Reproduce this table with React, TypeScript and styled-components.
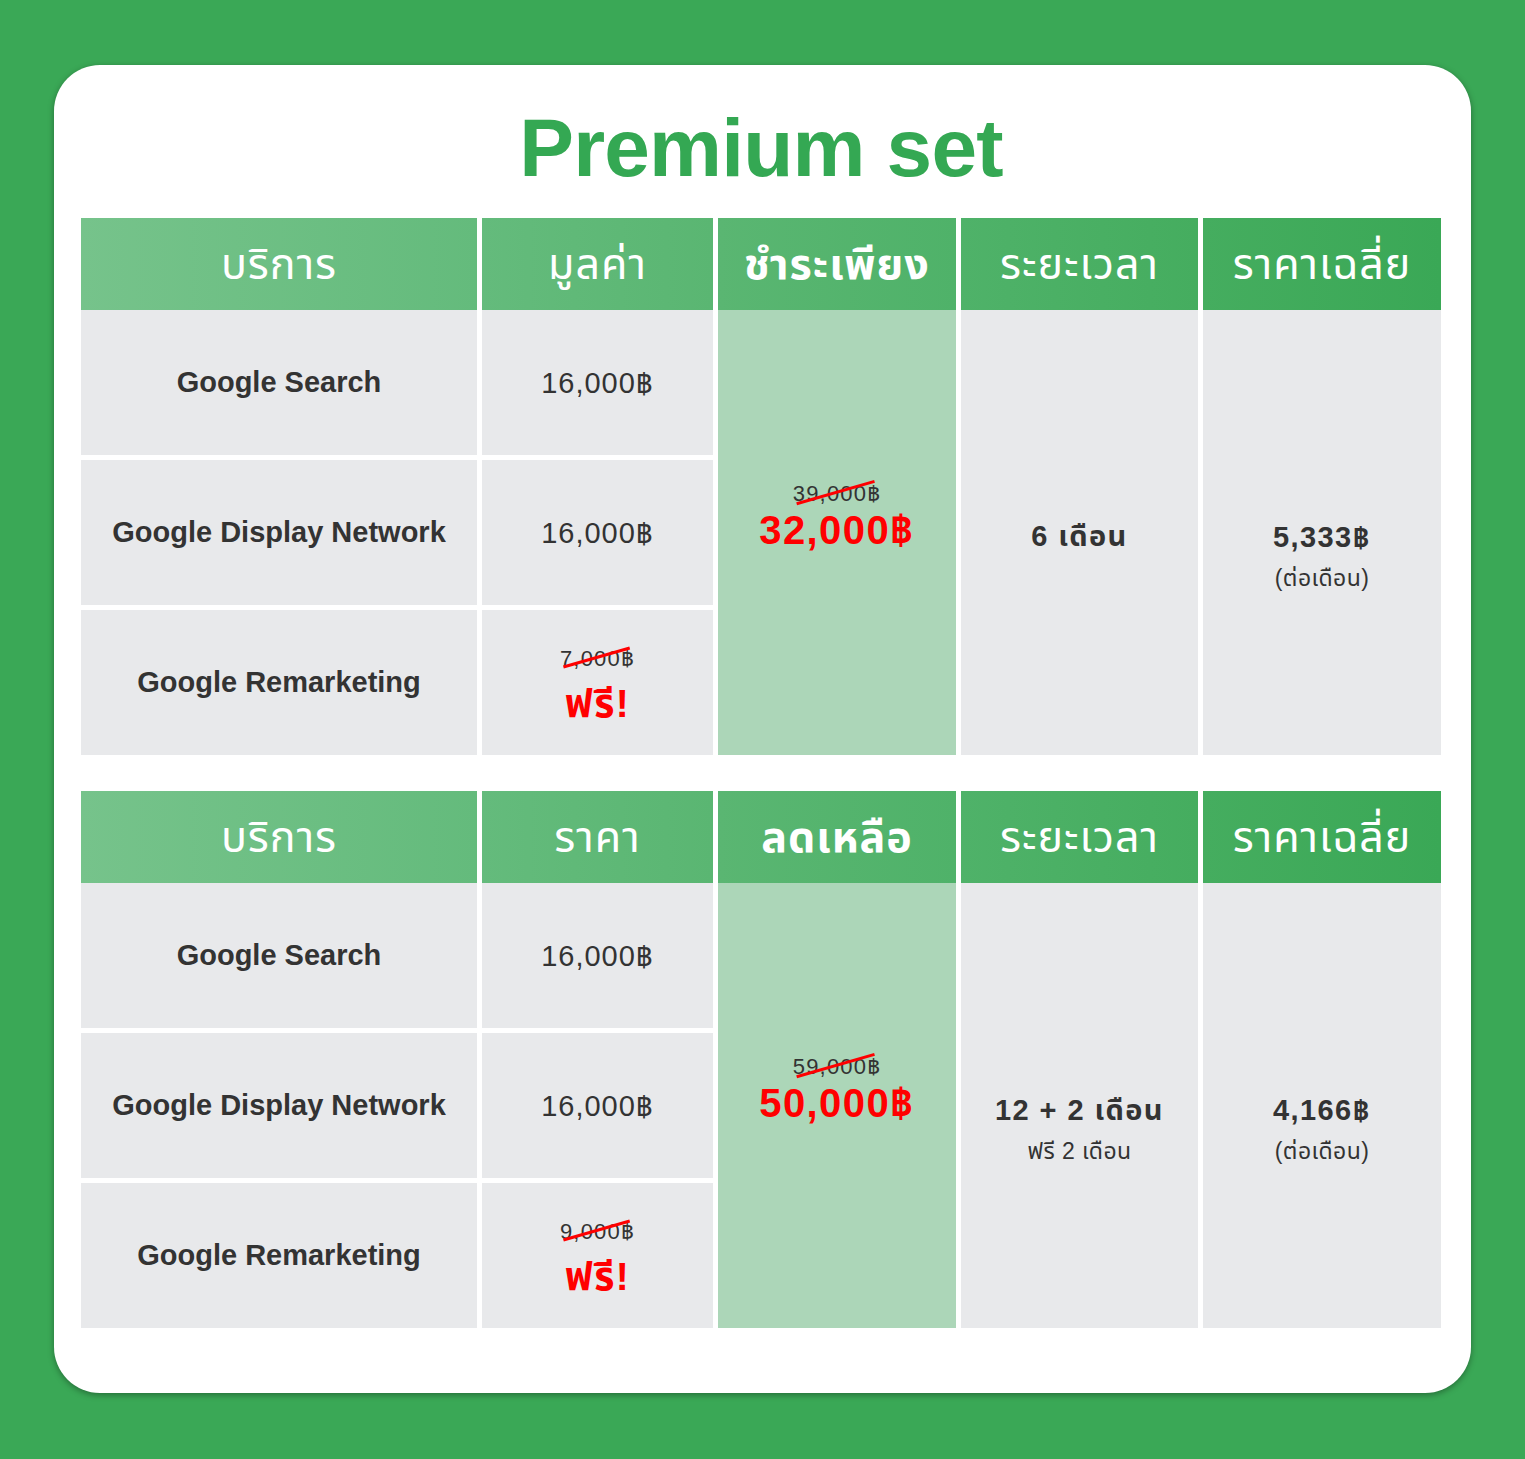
import React from 'react';
import styled, { createGlobalStyle, css } from 'styled-components';

const GlobalStyle = createGlobalStyle`
  body {
    margin: 0;
    background: #3aa856;
    font-family: "Liberation Sans", "Noto Sans Thai", "Noto Sans", sans-serif;
  }
`;

const COLS = '396px 231px 238px 237px 238px';

const Page = styled.div`
  width: 1525px;
  height: 1459px;
  padding: 65px 0 0 54px;
  box-sizing: border-box;
`;

const Card = styled.div`
  width: 1417px;
  height: 1328px;
  box-sizing: border-box;
  background: #ffffff;
  border-radius: 46px;
  box-shadow: 0 2px 6px rgba(0, 0, 0, 0.35);
  padding: 42px 30px 0 27px;
  display: flex;
  flex-direction: column;
`;

const Title = styled.h1`
  margin: 0 0 29px;
  text-align: center;
  font-family: "Liberation Sans", sans-serif;
  font-size: 82px;
  line-height: 82px;
  font-weight: 700;
  letter-spacing: -0.8px;
  color: #34a853;
`;

const Table = styled.div<{ $last?: boolean }>`
  width: 1360px;
  margin-bottom: ${({ $last }) => ($last ? 0 : 36)}px;
`;

const HeaderRow = styled.div`
  display: grid;
  grid-template-columns: ${COLS};
  column-gap: 5px;
  height: 92px;
  background: #ffffff;
`;

const HeaderCell = styled.div<{ $from: string; $to: string; $bold?: boolean }>`
  display: flex;
  align-items: center;
  justify-content: center;
  background: linear-gradient(90deg, ${({ $from }) => $from}, ${({ $to }) => $to});
  color: #ffffff;
  font-size: 43px;
  letter-spacing: 1px;
  font-weight: ${({ $bold }) => ($bold ? 700 : 400)};
  padding-top: 2px;
  box-sizing: border-box;
`;

const Body = styled.div`
  display: grid;
  grid-template-columns: ${COLS};
  grid-template-rows: repeat(3, 145px);
  column-gap: 5px;
  row-gap: 5px;
`;

const Cell = styled.div<{ $col?: number; $green?: boolean; $shift?: number }>`
  display: flex;
  flex-direction: column;
  align-items: center;
  justify-content: center;
  background: ${({ $green }) => ($green ? '#acd6b8' : '#e8e9eb')};
  color: #333333;
  ${({ $col }) =>
    $col &&
    css`
      grid-column: ${$col};
      grid-row: 1 / 4;
    `}
  padding-top: ${({ $shift }) => ($shift && $shift > 0 ? $shift : 0)}px;
  padding-bottom: ${({ $shift }) => ($shift && $shift < 0 ? -$shift : 0)}px;
  box-sizing: border-box;
`;

const ServiceName = styled.div`
  font-size: 29px;
  font-weight: 700;
  color: #333333;
`;

const Value = styled.div<{ $bold?: boolean }>`
  font-size: 29px;
  font-weight: ${({ $bold }) => ($bold ? 700 : 400)};
  letter-spacing: ${({ $bold }) => ($bold ? 1.4 : 1)}px;
  color: #333333;
  line-height: 34px;
`;

const SubValue = styled.div`
  margin-top: 10px;
  font-size: 23px;
  letter-spacing: 0.4px;
  color: #333333;
  line-height: 28px;
`;

const Struck = styled.span`
  position: relative;
  font-size: 22px;
  letter-spacing: 1.2px;
  line-height: 26px;
  color: #333333;

  &::after {
    content: '';
    position: absolute;
    left: 3%;
    top: 40%;
    width: 92%;
    height: 2.5px;
    background: #ff0000;
    transform: rotate(-16deg);
  }
`;

const RedPrice = styled.div<{ $size: number; $gap: number }>`
  margin-top: ${({ $gap }) => $gap}px;
  font-size: ${({ $size }) => $size}px;
  font-weight: 700;
  letter-spacing: 1.4px;
  color: #ff0000;
  line-height: ${({ $size }) => $size + 6}px;
`;

const HEAD_STOPS = [
  ['#76c38b', '#64bb7c'],
  ['#64bb7c', '#5ab672'],
  ['#5ab672', '#4fb269'],
  ['#4fb269', '#45ad5f'],
  ['#45ad5f', '#3aa856'],
];

interface PlanProps {
  headers: string[];
  freeWas: string;
  was: string;
  total: string;
  months: string;
  monthsNote?: string;
  perMonth: string;
  last?: boolean;
}

const Plan: React.FC<PlanProps> = ({ headers, freeWas, was, total, months, monthsNote, perMonth, last }) => (
  <Table $last={last}>
    <HeaderRow>
      {headers.map((h, i) => (
        <HeaderCell key={h} $from={HEAD_STOPS[i][0]} $to={HEAD_STOPS[i][1]} $bold={i === 2}>
          {h}
        </HeaderCell>
      ))}
    </HeaderRow>
    <Body>
      <Cell $col={3} $green $shift={-32}>
        <Struck>{was}</Struck>
        <RedPrice $size={40} $gap={0}>
          {total}
        </RedPrice>
      </Cell>
      <Cell $col={4} $shift={monthsNote ? 46 : 7}>
        <Value $bold>{months}</Value>
        {monthsNote && <SubValue>{monthsNote}</SubValue>}
      </Cell>
      <Cell $col={5} $shift={46}>
        <Value $bold>{perMonth}</Value>
        <SubValue>(ต่อเดือน)</SubValue>
      </Cell>
      <Cell>
        <ServiceName>Google Search</ServiceName>
      </Cell>
      <Cell>
        <Value>16,000฿</Value>
      </Cell>
      <Cell>
        <ServiceName>Google Display Network</ServiceName>
      </Cell>
      <Cell>
        <Value>16,000฿</Value>
      </Cell>
      <Cell>
        <ServiceName>Google Remarketing</ServiceName>
      </Cell>
      <Cell $shift={6}>
        <Struck>{freeWas}</Struck>
        <RedPrice $size={39} $gap={9}>
          ฟรี!
        </RedPrice>
      </Cell>
    </Body>
  </Table>
);

const App: React.FC = () => (
  <>
    <GlobalStyle />
    <Page>
      <Card>
        <Title>Premium set</Title>
        <Plan
          headers={['บริการ', 'มูลค่า', 'ชำระเพียง', 'ระยะเวลา', 'ราคาเฉลี่ย']}
          freeWas="7,000฿"
          was="39,000฿"
          total="32,000฿"
          months="6 เดือน"
          perMonth="5,333฿"
        />
        <Plan
          headers={['บริการ', 'ราคา', 'ลดเหลือ', 'ระยะเวลา', 'ราคาเฉลี่ย']}
          freeWas="9,000฿"
          was="59,000฿"
          total="50,000฿"
          months="12 + 2 เดือน"
          monthsNote="ฟรี 2 เดือน"
          perMonth="4,166฿"
          last
        />
      </Card>
    </Page>
  </>
);

export default App;
